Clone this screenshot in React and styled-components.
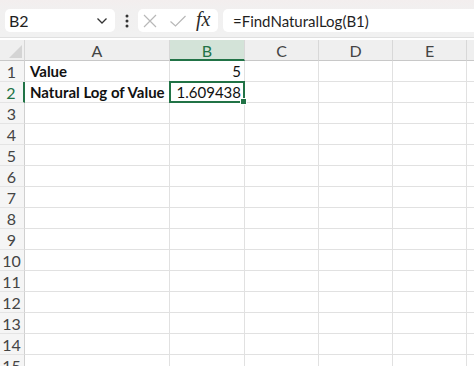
import React from 'react'
import styled, { createGlobalStyle } from 'styled-components'

const GlobalStyle = createGlobalStyle`
  html, body {
    margin: 0;
    padding: 0;
    background: #ffffff;
    overflow: hidden;
  }
  body {
    font-family: Lato, "Open Sans", sans-serif;
  }
`

const GREEN = '#217346'
const COLS = ['A', 'B', 'C', 'D', 'E', '']
const COL_WIDTHS = '25px 145px 75px 74px 74px 74px 1fr'
const ROWS = 15

const data = {
  '1A': { text: 'Value', bold: true },
  '1B': { text: '5', right: true },
  '2A': { text: 'Natural Log of Value', bold: true },
  '2B': { text: '1.609438', right: true, selected: true },
}

const Sheet = styled.div`
  width: 474px;
  height: 366px;
  overflow: hidden;
  display: flex;
  flex-direction: column;
`

const Toolbar = styled.div`
  height: 37px;
  flex: none;
  background: linear-gradient(#f3eeee, #f1f0f0 30%, #f1f1f1);
  border-bottom: 1px solid #e0e0e0;
  display: flex;
  align-items: center;
  padding: 0 0 0 5px;
`

const Field = styled.div`
  height: 23px;
  background: #ffffff;
  border-radius: ${p => (p.$open ? '5px 0 0 5px' : '5px')};
  display: flex;
  align-items: center;
  box-sizing: border-box;
  width: ${p => p.$w};
  flex: ${p => (p.$grow ? '1' : 'none')};
  padding: ${p => p.$pad || '0'};
  margin-top: 4px;
`

const NameText = styled.span`
  font-size: 16px;
  color: #1f1f1f;
  flex: 1;
`

const FormulaText = styled.span`
  font-size: 15px;
  color: #1f1f1f;
`

const Dots = styled.div`
  width: 23px;
  display: flex;
  justify-content: center;
  margin-top: 4px;
`

const Fx = styled.span`
  font-family: "Liberation Serif", serif;
  font-style: italic;
  font-size: 20px;
  color: #2b2b2b;
  margin-left: 9px;
  margin-top: -2px;
`

const Grid = styled.div`
  display: grid;
  grid-template-columns: ${COL_WIDTHS};
  grid-auto-rows: 21px;
  margin-top: 2px;
`

const Corner = styled.div`
  background: #efefef;
  border-bottom: 1px solid #c8c8c8;
  border-right: 1px solid #d6d6d6;
  position: relative;
  box-sizing: border-box;
  &::after {
    content: '';
    position: absolute;
    right: 2px;
    bottom: 2px;
    width: 0;
    height: 0;
    border-left: 13px solid transparent;
    border-bottom: 13px solid #d4d4d4;
  }
`

const ColHead = styled.div`
  box-sizing: border-box;
  background: ${p => (p.$active ? '#d3e3d8' : '#efefef')};
  border-bottom: ${p => (p.$active ? `2px solid ${GREEN}` : '1px solid #c8c8c8')};
  border-right: 1px solid #d8d8d8;
  color: ${p => (p.$active ? GREEN : '#444')};
  font-size: 16px;
  display: flex;
  align-items: center;
  justify-content: center;
  padding-top: ${p => (p.$active ? '1px' : '0')};
`

const RowHead = styled.div`
  box-sizing: border-box;
  background: #f5f5f5;
  border-right: ${p => (p.$active ? `2px solid ${GREEN}` : '1px solid #d0d0d0')};
  border-bottom: 1px solid #e4e4e4;
  color: ${p => (p.$active ? GREEN : '#444')};
  font-size: 16px;
  display: flex;
  align-items: center;
  justify-content: center;
  padding-right: 1px;
`

const Cell = styled.div`
  box-sizing: border-box;
  border-right: 1px solid #e1e1e1;
  border-bottom: 1px solid #e1e1e1;
  display: flex;
  align-items: center;
  justify-content: ${p => (p.$right ? 'flex-end' : 'flex-start')};
  padding: 0 3px 0 5px;
  min-width: 0;
  position: relative;
`

const CellText = styled.span`
  font-size: 15px;
  font-weight: ${p => (p.$bold ? 700 : 400)};
  color: #111;
  white-space: nowrap;
`

const Selection = styled.div`
  position: absolute;
  left: -1px;
  top: -1px;
  right: -1px;
  bottom: -1px;
  border: 2px solid ${GREEN};
  pointer-events: none;
  z-index: 2;
  &::after {
    content: '';
    position: absolute;
    right: -4px;
    bottom: -4px;
    width: 5px;
    height: 5px;
    background: ${GREEN};
    border: 1px solid #ffffff;
  }
`

const Chevron = () => (
  <svg width="12" height="8" viewBox="0 0 12 8">
    <path d="M1.5 1.5 L6 6 L10.5 1.5" fill="none" stroke="#333" strokeWidth="1.3" />
  </svg>
)

const VDots = () => (
  <svg width="4" height="14" viewBox="0 0 4 14">
    <circle cx="2" cy="2" r="1.5" fill="#333" />
    <circle cx="2" cy="7" r="1.5" fill="#333" />
    <circle cx="2" cy="12" r="1.5" fill="#333" />
  </svg>
)

const Cross = () => (
  <svg width="16" height="16" viewBox="0 0 16 16">
    <path d="M2 2 L14 14 M14 2 L2 14" stroke="#b8b8b8" strokeWidth="1.2" fill="none" />
  </svg>
)

const Check = () => (
  <svg width="18" height="14" viewBox="0 0 18 14">
    <path d="M1.5 7.5 L6.5 12 L16.5 2" stroke="#b8b8b8" strokeWidth="1.2" fill="none" />
  </svg>
)

const IconGap = styled.span`
  display: inline-block;
  flex: none;
  width: ${p => p.$w};
`

export default function App() {
  const rows = []
  for (let r = 1; r <= ROWS; r++) rows.push(r)

  return (
    <Sheet>
      <GlobalStyle />
      <Toolbar>
        <Field $w="110px" $pad="0 7px 0 4px">
          <NameText>B2</NameText>
          <Chevron />
        </Field>
        <Dots>
          <VDots />
        </Dots>
        <Field $w="80px" $pad="0 0 0 4px">
          <Cross />
          <IconGap $w="11px" />
          <Check />
          <Fx>fx</Fx>
        </Field>
        <IconGap $w="5px" />
        <Field $grow $open $pad="0 0 0 10px">
          <FormulaText>=FindNaturalLog(B1)</FormulaText>
        </Field>
      </Toolbar>
      <Grid>
        <Corner />
        {COLS.map((c, i) => (
          <ColHead key={i} $active={c === 'B'}>{c}</ColHead>
        ))}
        {rows.map(r => (
          <React.Fragment key={r}>
            <RowHead $active={r === 2}>{r}</RowHead>
            {COLS.map((c, i) => {
              const d = data[`${r}${c}`] || {}
              return (
                <Cell key={i} $right={d.right}>
                  {d.text && <CellText $bold={d.bold}>{d.text}</CellText>}
                  {d.selected && <Selection />}
                </Cell>
              )
            })}
          </React.Fragment>
        ))}
      </Grid>
    </Sheet>
  )
}
